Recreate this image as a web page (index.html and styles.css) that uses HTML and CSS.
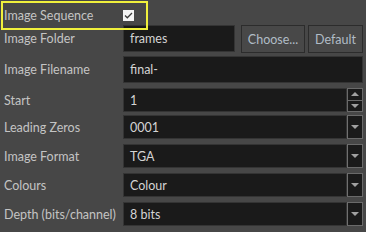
FILE: index.html
```html
<!DOCTYPE html>
<html lang="en">
<head>
    <meta charset="UTF-8">
    <title>Image Sequence Settings</title>
    <link rel="stylesheet" href="styles.css">
</head>
<body>
    <div class="panel">
        <div class="row seq">
            <span class="label">Image Sequence</span>
            <span class="check">
                <svg width="11" height="11" viewBox="0 0 11 11"><path d="M2 5.5 L4.3 7.8 L9 3" fill="none" stroke="#3a3a3a" stroke-width="1.3"/></svg>
            </span>
        </div>
        <div class="row tall">
            <span class="label">Image Folder</span>
            <div class="control">
                <div class="field grow">frames</div>
                <button class="btn choose">Choose...</button>
                <button class="btn">Default</button>
            </div>
        </div>
        <div class="row tall filename">
            <span class="label">Image Filename</span>
            <div class="control">
                <div class="field grow">final-</div>
            </div>
        </div>
        <div class="row start">
            <span class="label">Start</span>
            <div class="control">
                <div class="field grow">1</div>
                <div class="spin">
                    <span class="spin-btn"><i class="tri up"></i></span>
                    <span class="spin-btn"><i class="tri"></i></span>
                </div>
            </div>
        </div>
        <div class="row">
            <span class="label">Leading Zeros</span>
            <div class="control combo">
                <div class="field grow">0001</div>
                <span class="drop"><i class="tri"></i></span>
            </div>
        </div>
        <div class="row">
            <span class="label">Image Format</span>
            <div class="control combo">
                <div class="field grow">TGA</div>
                <span class="drop"><i class="tri"></i></span>
            </div>
        </div>
        <div class="row">
            <span class="label">Colours</span>
            <div class="control combo">
                <div class="field grow">Colour</div>
                <span class="drop"><i class="tri"></i></span>
            </div>
        </div>
        <div class="row">
            <span class="label">Depth (bits/channel)</span>
            <div class="control combo">
                <div class="field grow">8 bits</div>
                <span class="drop"><i class="tri"></i></span>
            </div>
        </div>

        <!-- tutorial highlight drawn over the first row -->
        <div class="highlight"></div>
    </div>
</body>
</html>
```

FILE: styles.css
```css
body {
    margin: 0;
    background: #474747;
    font-family: Lato, "Noto Sans", sans-serif;
    font-size: 12.5px;
    color: #c4c4c4;
}
.panel {
    position: relative;
    width: 366px;
    height: 232px;
    display: flex;
    flex-direction: column;
}
.row {
    display: flex;
    align-items: flex-start;
    height: 29px;
}
.row .label {
    width: 119px;
    padding-left: 4px;
    height: 24px;
    line-height: 25px;
    white-space: nowrap;
    flex-shrink: 0;
}
.control {
    display: flex;
    width: 240px;
    height: 24px;
}
.field {
    box-sizing: border-box;
    height: 100%;
    background: #1a1a1a;
    border: 1px solid #343434;
    color: #d4d4d4;
    padding-left: 6px;
    line-height: 23px;
}
.grow {
    flex: 1;
}

/* first row with checkbox */
.row.seq {
    height: 20px;
    padding-top: 5px;
    align-items: center;
}
.row.seq .label {
    height: 20px;
    line-height: 22px;
}
.check {
    width: 11px;
    height: 11px;
    background: #f4f4f4;
    display: flex;
}

/* line edits are taller */
.row.tall {
    height: 31px;
}
.row.tall .label,
.row.tall .control {
    height: 27px;
    line-height: 28px;
}
.row.tall .field {
    line-height: 26px;
}
.row.filename {
    height: 32px;
}
.row.start {
    height: 27px;
}

.btn {
    box-sizing: border-box;
    height: 28px;
    margin-left: 6px;
    padding: 0 5px;
    background: #484848;
    border: 1px solid #2c2c2c;
    color: #b0bcc6;
    font-family: inherit;
    font-size: 12.5px;
}
.btn.choose {
    width: 64px;
}
.btn + .btn {
    margin-left: 3px;
    width: 55px;
}

/* spin box and combo arrows */
.spin {
    display: flex;
    flex-direction: column;
    width: 16px;
    height: 24px;
    background: #1a1a1a;
}
.spin-btn {
    box-sizing: border-box;
    flex: 1;
    border: 1px solid #6a6a6a;
    display: flex;
    align-items: center;
    justify-content: center;
}
.spin-btn + .spin-btn {
    border-top: none;
}
.drop {
    box-sizing: border-box;
    width: 16px;
    height: 24px;
    background: #1a1a1a;
    border: 1px solid #6a6a6a;
    border-left-color: #707070;
    display: flex;
    align-items: center;
    justify-content: center;
}
.tri {
    width: 0;
    height: 0;
    border-left: 4px solid transparent;
    border-right: 4px solid transparent;
    border-top: 4px solid #a0a0a0;
}
.tri.up {
    border-top: none;
    border-bottom: 4px solid #a0a0a0;
}

.highlight {
    position: absolute;
    left: 1px;
    top: 1px;
    width: 143px;
    height: 25px;
    border: 2px solid #f0f03c;
}
```
